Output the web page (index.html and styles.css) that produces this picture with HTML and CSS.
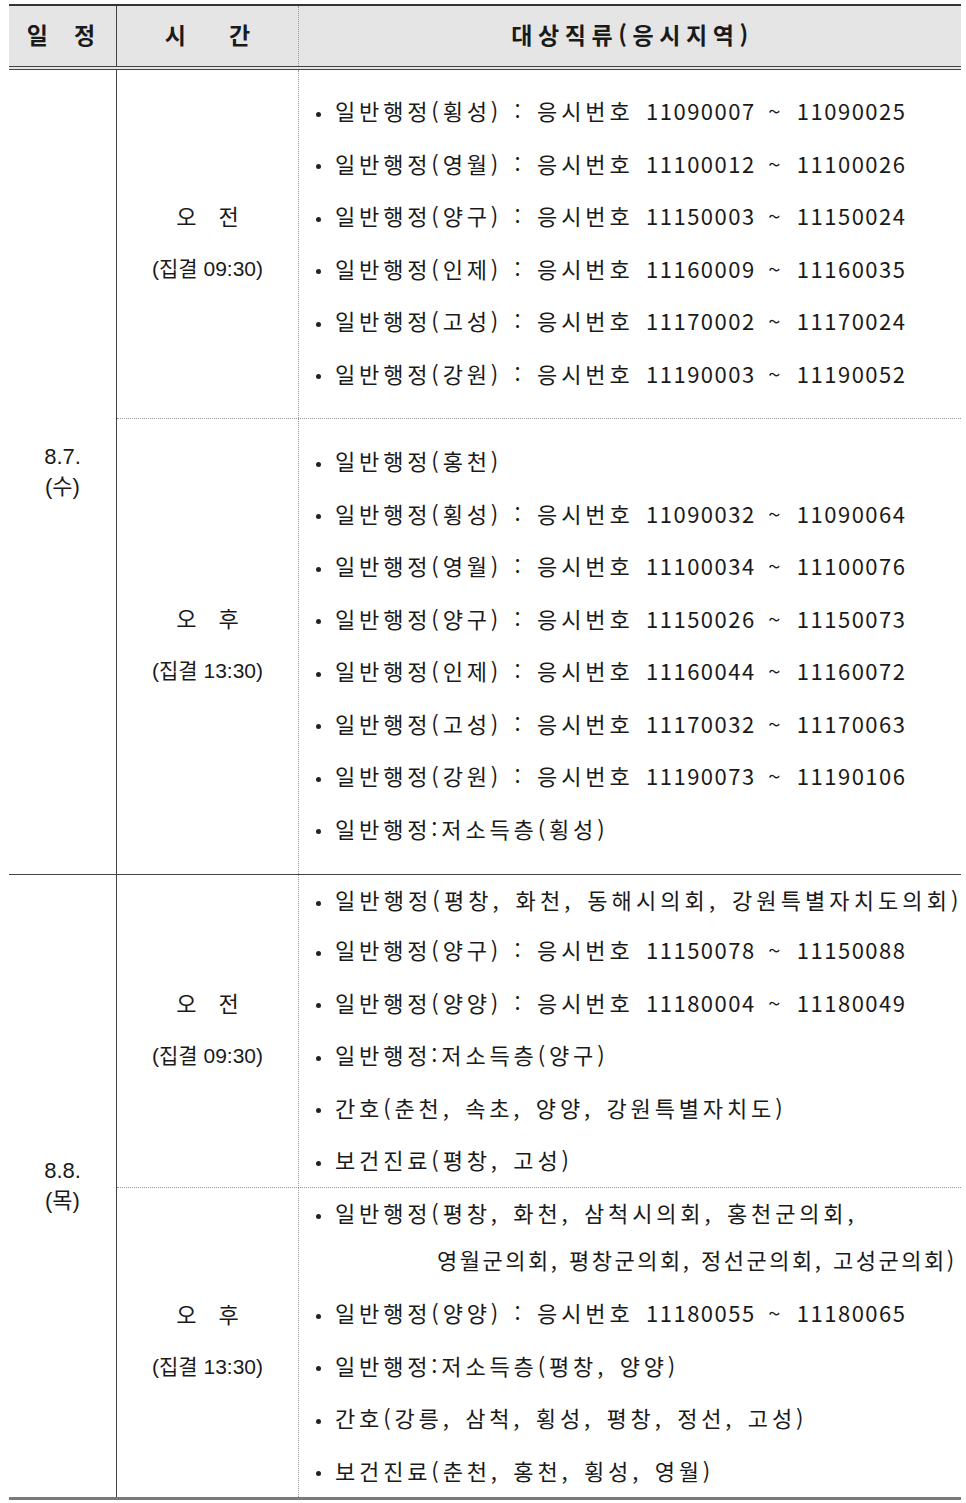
FILE: index.html
```html
<!DOCTYPE html>
<html lang="ko">
<head>
<meta charset="utf-8">
<link rel="stylesheet" href="styles.css">
</head>
<body>
<div class="sheet">
  <div class="head">
    <div class="hcell c1"><span>일</span><span>정</span></div>
    <div class="hcell c2"><span>시</span><span>간</span></div>
    <div class="hcell c3">대상직류(응시지역)</div>
  </div>

  <div class="day day1">
    <div class="date"><div>8.7.</div><div>(수)</div></div>
    <div class="sessions">
      <div class="session s1">
        <div class="time"><div class="tname"><span>오</span><span>전</span></div><div class="tmeet">(집결 09:30)</div></div>
        <div class="items up">
          <div class="item"><span class="dot"></span>일반행정(횡성) : 응시번호 <span class="n">11090007</span> ~ <span class="n">11090025</span></div>
          <div class="item"><span class="dot"></span>일반행정(영월) : 응시번호 <span class="n">11100012</span> ~ <span class="n">11100026</span></div>
          <div class="item"><span class="dot"></span>일반행정(양구) : 응시번호 <span class="n">11150003</span> ~ <span class="n">11150024</span></div>
          <div class="item"><span class="dot"></span>일반행정(인제) : 응시번호 <span class="n">11160009</span> ~ <span class="n">11160035</span></div>
          <div class="item"><span class="dot"></span>일반행정(고성) : 응시번호 <span class="n">11170002</span> ~ <span class="n">11170024</span></div>
          <div class="item"><span class="dot"></span>일반행정(강원) : 응시번호 <span class="n">11190003</span> ~ <span class="n">11190052</span></div>
        </div>
      </div>
      <div class="session s2">
        <div class="time"><div class="tname"><span>오</span><span>후</span></div><div class="tmeet">(집결 13:30)</div></div>
        <div class="items up">
          <div class="item"><span class="dot"></span>일반행정(홍천)</div>
          <div class="item"><span class="dot"></span>일반행정(횡성) : 응시번호 <span class="n">11090032</span> ~ <span class="n">11090064</span></div>
          <div class="item"><span class="dot"></span>일반행정(영월) : 응시번호 <span class="n">11100034</span> ~ <span class="n">11100076</span></div>
          <div class="item"><span class="dot"></span>일반행정(양구) : 응시번호 <span class="n">11150026</span> ~ <span class="n">11150073</span></div>
          <div class="item"><span class="dot"></span>일반행정(인제) : 응시번호 <span class="n">11160044</span> ~ <span class="n">11160072</span></div>
          <div class="item"><span class="dot"></span>일반행정(고성) : 응시번호 <span class="n">11170032</span> ~ <span class="n">11170063</span></div>
          <div class="item"><span class="dot"></span>일반행정(강원) : 응시번호 <span class="n">11190073</span> ~ <span class="n">11190106</span></div>
          <div class="item"><span class="dot"></span>일반행정:저소득층(횡성)</div>
        </div>
      </div>
    </div>
  </div>

  <div class="day day2">
    <div class="date"><div>8.8.</div><div>(목)</div></div>
    <div class="sessions">
      <div class="session s3">
        <div class="time"><div class="tname"><span>오</span><span>전</span></div><div class="tmeet">(집결 09:30)</div></div>
        <div class="items up-s">
          <div class="item tight"><span class="dot"></span>일반행정(평창, 화천, 동해시의회, 강원특별자치도의회)</div>
          <div class="item"><span class="dot"></span>일반행정(양구) : 응시번호 <span class="n">11150078</span> ~ <span class="n">11150088</span></div>
          <div class="item"><span class="dot"></span>일반행정(양양) : 응시번호 <span class="n">11180004</span> ~ <span class="n">11180049</span></div>
          <div class="item"><span class="dot"></span>일반행정:저소득층(양구)</div>
          <div class="item"><span class="dot"></span>간호(춘천, 속초, 양양, 강원특별자치도)</div>
          <div class="item"><span class="dot"></span>보건진료(평창, 고성)</div>
        </div>
      </div>
      <div class="session s4">
        <div class="time"><div class="tname"><span>오</span><span>후</span></div><div class="tmeet">(집결 13:30)</div></div>
        <div class="items">
          <div class="item wrap"><div><span class="dot"></span>일반행정(평창, 화천, 삼척시의회, 홍천군의회,</div><div class="cont">영월군의회, 평창군의회, 정선군의회, 고성군의회)</div></div>
          <div class="item"><span class="dot"></span>일반행정(양양) : 응시번호 <span class="n">11180055</span> ~ <span class="n">11180065</span></div>
          <div class="item"><span class="dot"></span>일반행정:저소득층(평창, 양양)</div>
          <div class="item"><span class="dot"></span>간호(강릉, 삼척, 횡성, 평창, 정선, 고성)</div>
          <div class="item"><span class="dot"></span>보건진료(춘천, 홍천, 횡성, 영월)</div>
        </div>
      </div>
    </div>
  </div>
</div>
</body>
</html>
```

FILE: styles.css
```css
html, body {
  margin: 0;
  padding: 0;
  background: #ffffff;
}
body {
  font-family: "Noto Sans CJK KR", "Noto Sans", sans-serif;
  color: #1a1a1a;
}
.sheet {
  width: 952px;
  margin: 4px 0 0 9px;
  border-top: 2px solid #333;
  border-bottom: 3px solid #7a7a7a;
}
.head {
  display: grid;
  grid-template-columns: 108px 182px 662px;
  height: 60px;
  background: #e5e5e5;
  border-bottom: 4px double #444;
}
.hcell {
  display: flex;
  align-items: center;
  justify-content: center;
  font-size: 23px;
  font-weight: bold;
  padding-bottom: 4px;
}
.hcell.c1 { border-right: 1px solid #444; gap: 26px; padding-right: 3px; }
.hcell.c2 { border-right: 1px dotted #999; gap: 43px; }
.hcell.c3 { letter-spacing: 5.6px; padding-left: 5px; }
.day {
  display: grid;
  grid-template-columns: 108px 844px;
}
.day1 { border-bottom: 1px solid #444; }
.date {
  border-right: 1px solid #444;
  display: flex;
  flex-direction: column;
  justify-content: center;
  align-items: center;
  font-family: "Liberation Sans", "Noto Sans CJK KR", sans-serif;
  font-size: 22px;
  line-height: 30px;
  padding-bottom: 1px;
}
.session {
  display: grid;
  grid-template-columns: 182px 662px;
}
.s1 { height: 348px; border-bottom: 1px dotted #999; }
.s2 { height: 455px; }
.s3 { height: 312px; border-bottom: 1px dotted #999; }
.s4 { height: 309px; }
.time {
  border-right: 1px dotted #999;
  display: flex;
  flex-direction: column;
  justify-content: center;
  align-items: center;
  font-size: 22px;
  line-height: 53px;
  padding-bottom: 5px;
}
.tname {
  display: flex;
  gap: 22px;
}
.tmeet {
  font-family: "Liberation Sans", "Noto Sans CJK KR", sans-serif;
  font-size: 21px;
}
.items {
  display: flex;
  flex-direction: column;
  justify-content: center;
  padding-left: 17px;
  font-size: 22px;
  letter-spacing: 3.85px;
  word-spacing: 2.5px;
  white-space: nowrap;
}
.items.up { padding-bottom: 5px; }
.items.up-s { padding-bottom: 2px; }
.item {
  line-height: 52.5px;
}
.n { letter-spacing: 1.5px; }
.item.tight { line-height: 48px; letter-spacing: 4.1px; }
.dot {
  display: inline-block;
  width: 5px;
  height: 5px;
  border-radius: 50%;
  background: #222;
  margin-right: 14px;
  vertical-align: middle;
}
.item.wrap { line-height: 47px; margin-bottom: 3px; }
.cont { padding-left: 121px; letter-spacing: 2.5px; word-spacing: 1px; }
```
